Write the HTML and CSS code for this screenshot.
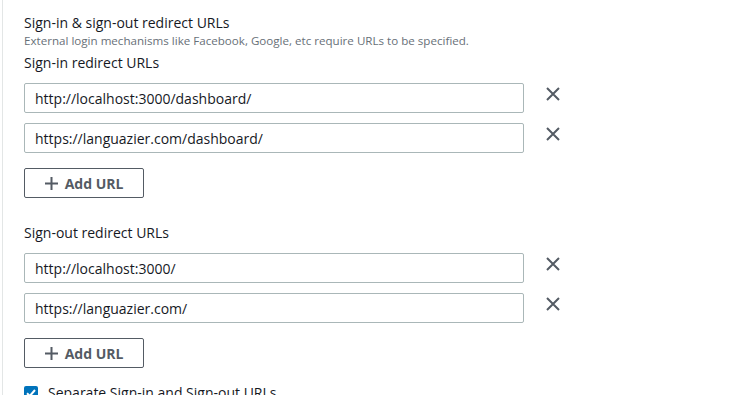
FILE: index.html
```html
<!DOCTYPE html>
<html lang="en">
<head>
    <meta charset="UTF-8">
    <title>Redirect URLs</title>
    <link rel="stylesheet" href="styles.css">
</head>
<body>
    <div class="panel">
        <h3 class="title">Sign-in &amp; sign-out redirect URLs</h3>
        <p class="desc">External login mechanisms like Facebook, Google, etc require URLs to be specified.</p>

        <div class="group">
            <label class="label">Sign-in redirect URLs</label>
            <div class="row">
                <input class="url" type="text" value="http://localhost:3000/dashboard/">
                <button class="remove" title="Remove">
                    <svg width="14" height="14" viewBox="0 0 14 14"><path d="M1 1L13 13M13 1L1 13" stroke="#545b64" stroke-width="2"/></svg>
                </button>
            </div>
            <div class="row">
                <input class="url" type="text" value="https://languazier.com/dashboard/">
                <button class="remove" title="Remove">
                    <svg width="14" height="14" viewBox="0 0 14 14"><path d="M1 1L13 13M13 1L1 13" stroke="#545b64" stroke-width="2"/></svg>
                </button>
            </div>
            <button class="add">
                <svg width="13" height="13" viewBox="0 0 13 13"><path d="M6.5 0V13M0 6.5H13" stroke="#545b64" stroke-width="2"/></svg>
                Add URL
            </button>
        </div>

        <div class="group second">
            <label class="label">Sign-out redirect URLs</label>
            <div class="row">
                <input class="url" type="text" value="http://localhost:3000/">
                <button class="remove" title="Remove">
                    <svg width="14" height="14" viewBox="0 0 14 14"><path d="M1 1L13 13M13 1L1 13" stroke="#545b64" stroke-width="2"/></svg>
                </button>
            </div>
            <div class="row">
                <input class="url" type="text" value="https://languazier.com/">
                <button class="remove" title="Remove">
                    <svg width="14" height="14" viewBox="0 0 14 14"><path d="M1 1L13 13M13 1L1 13" stroke="#545b64" stroke-width="2"/></svg>
                </button>
            </div>
            <button class="add">
                <svg width="13" height="13" viewBox="0 0 13 13"><path d="M6.5 0V13M0 6.5H13" stroke="#545b64" stroke-width="2"/></svg>
                Add URL
            </button>
        </div>

        <label class="check">
            <span class="box">
                <svg width="14" height="14" viewBox="0 0 14 14"><path d="M3 7.2L5.8 10L11 4" stroke="#fff" stroke-width="2" fill="none"/></svg>
            </span>
            Separate Sign-in and Sign-out URLs
        </label>
    </div>
</body>
</html>
```

FILE: styles.css
```css
body {
    margin: 0;
    background: #fff;
    font-family: "Open Sans", Arial, sans-serif;
    color: #16191f;
    overflow: hidden;
}
.panel {
    margin-left: 2px;
    border-left: 1px solid #e3e6e6;
    padding: 13px 0 0 21px;
    min-height: 400px;
}
.title {
    margin: 0;
    font-size: 14px;
    font-weight: normal;
    line-height: 20px;
}
.desc {
    margin: 0;
    font-size: 11.6px;
    line-height: 16px;
    color: #687078;
}
.group {
    display: flex;
    flex-direction: column;
    align-items: flex-start;
    margin-top: 4px;
}
.group.second {
    margin-top: 25px;
}
.label {
    font-size: 14px;
    line-height: 20px;
    margin-bottom: 10px;
}
.row {
    display: flex;
    align-items: flex-start;
    margin-bottom: 10px;
}
.url {
    box-sizing: border-box;
    width: 500px;
    height: 30px;
    padding: 0 10px;
    border: 1px solid #aab7b8;
    border-radius: 2px;
    font-family: inherit;
    font-size: 14px;
    color: #16191f;
}
.remove {
    background: none;
    border: none;
    padding: 0;
    margin: 4px 0 0 22px;
    width: 14px;
    height: 14px;
    display: flex;
    cursor: pointer;
}
.add {
    box-sizing: border-box;
    margin-top: 5px;
    width: 120px;
    height: 30px;
    display: flex;
    align-items: center;
    justify-content: center;
    gap: 7px;
    background: #fff;
    border: 1px solid #545b64;
    border-radius: 2px;
    font-family: inherit;
    font-size: 14px;
    font-weight: bold;
    color: #545b64;
    cursor: pointer;
}
.check {
    display: flex;
    align-items: flex-start;
    gap: 10px;
    margin-top: 15px;
    font-size: 14px;
    line-height: 20px;
}
.box {
    width: 14px;
    height: 14px;
    margin-top: 3px;
    background: #0073bb;
    border-radius: 2px;
    display: flex;
}
```
